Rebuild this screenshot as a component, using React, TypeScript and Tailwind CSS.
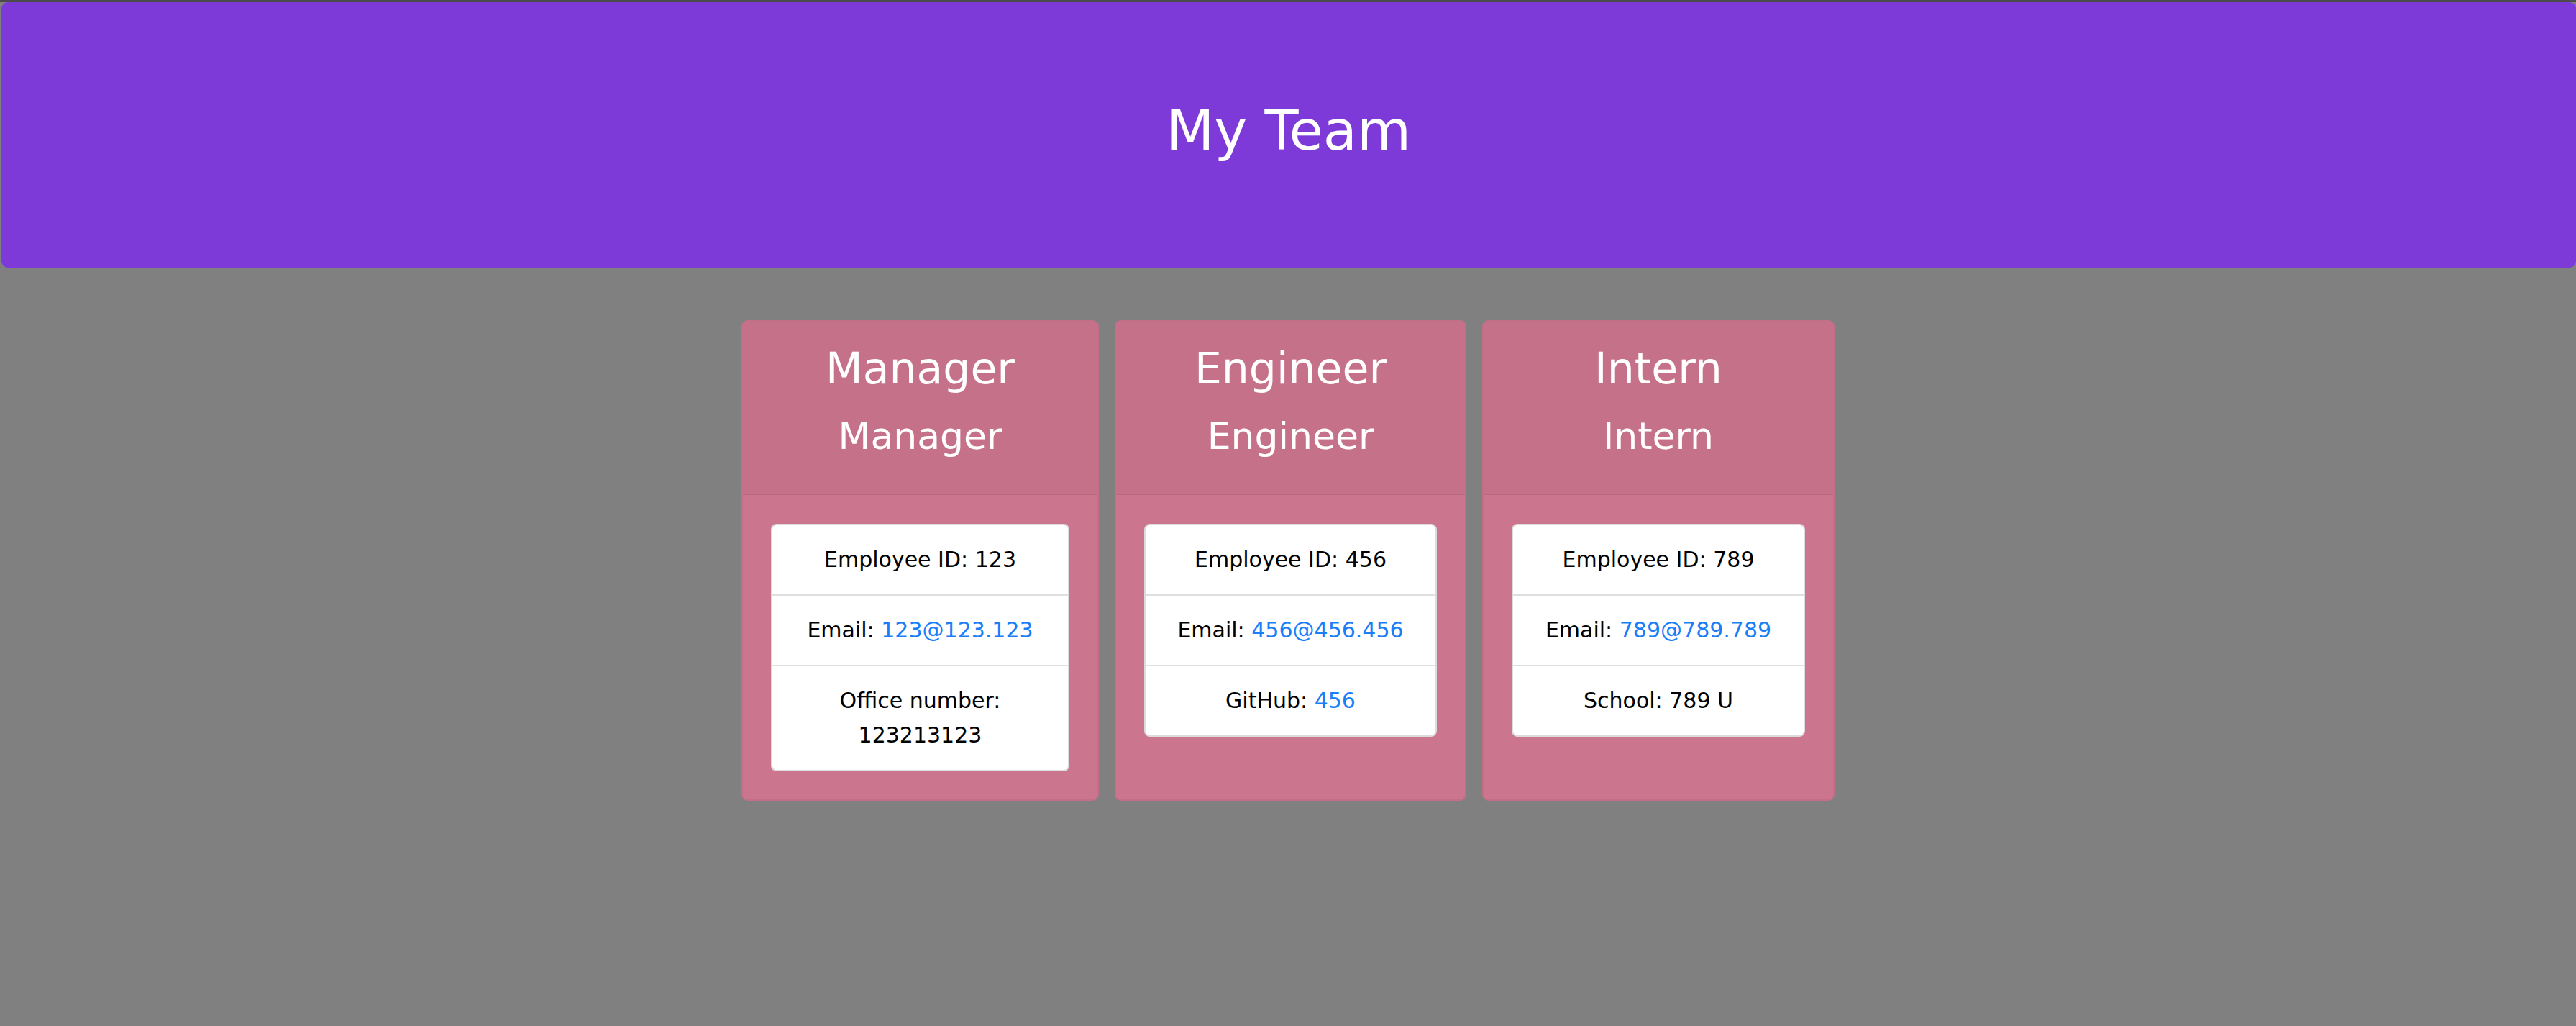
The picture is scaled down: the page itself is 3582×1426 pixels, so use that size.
import React from "react";

type Row = { label: string; value: string; link?: boolean };
type Member = { title: string; role: string; width: string; rows: Row[] };

const team: Member[] = [
  {
    title: "Manager",
    role: "Manager",
    width: "w-[497px]",
    rows: [
      { label: "Employee ID:", value: "123" },
      { label: "Email:", value: "123@123.123", link: true },
      { label: "Office number:", value: "123213123" },
    ],
  },
  {
    title: "Engineer",
    role: "Engineer",
    width: "w-[489px]",
    rows: [
      { label: "Employee ID:", value: "456" },
      { label: "Email:", value: "456@456.456", link: true },
      { label: "GitHub:", value: "456", link: true },
    ],
  },
  {
    title: "Intern",
    role: "Intern",
    width: "w-[490px]",
    rows: [
      { label: "Employee ID:", value: "789" },
      { label: "Email:", value: "789@789.789", link: true },
      { label: "School:", value: "789 U" },
    ],
  },
];

function Card({ m }: { m: Member }) {
  return (
    <div
      className={`${m.width} flex flex-col rounded-[9px] border-2 border-[#c2708a] bg-[#cb768e] overflow-hidden`}
    >
      <div className="bg-[#c6718a] border-b-2 border-[#b8697f] pt-[27px] pb-[46px] text-center text-white">
        <h2 className="text-[60px] leading-[77px] font-normal">{m.title}</h2>
        <h3 className="mt-[22px] text-[52px] leading-[67px] font-normal">{m.role}</h3>
      </div>
      <div className="flex-1 px-[39px] pt-[40px] pb-[39px]">
        <ul className="bg-white rounded-[8px] border-2 border-[#dcdcdc]">
          {m.rows.map((r, i) => (
            <li
              key={i}
              className={`px-[40px] py-[24px] text-center text-[30px] leading-[48px] text-black ${
                i > 0 ? "border-t-2 border-[#dfdfdf]" : ""
              }`}
            >
              {r.label}{" "}
              {r.link ? (
                <a className="text-[#1a7ef8]" href="#">
                  {r.value}
                </a>
              ) : (
                r.value
              )}
            </li>
          ))}
        </ul>
      </div>
    </div>
  );
}

export default function App() {
  return (
    <div className="min-h-screen bg-[#808080] border-t-[3px] border-[#4b4b4b] font-['DejaVu_Sans',sans-serif]">
      <header className="ml-[2px] h-[369px] rounded-[9px] bg-[#7e3ad9] pt-[140px] text-center text-white">
        <h1 className="text-[77px] leading-[77px] font-normal">My Team</h1>
      </header>
      <main className="mt-[73px] flex justify-center gap-[22px] items-stretch">
        {team.map((m) => (
          <Card key={m.title} m={m} />
        ))}
      </main>
    </div>
  );
}
